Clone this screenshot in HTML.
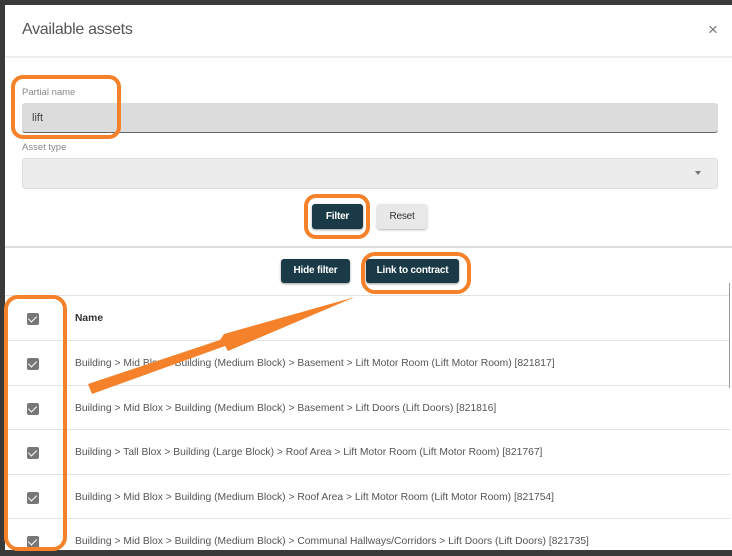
<!DOCTYPE html>
<html><head><style>
body{margin:0;width:732px;height:556px;background:#3a3a3a;font-family:"Liberation Sans",sans-serif;position:relative;overflow:hidden}
.dlg{position:absolute;left:5px;top:5px;width:727px;height:545px;background:#fff;overflow:hidden}
.abs{position:absolute}
.btn{position:absolute;background:#1b3a47;color:#fff;font-size:10px;font-weight:bold;text-align:center;border-radius:3px;box-shadow:0 1px 2px rgba(0,0,0,.4);letter-spacing:-0.2px}
.row{position:absolute;left:19px;width:706px;border-top:1px solid #e2e2e2;height:44px}
.cb{position:absolute;left:8px;width:12px;height:12px;background:#777;border-radius:2px}
.cb:after{content:"";position:absolute;left:3px;top:1px;width:4px;height:7px;border:solid #fff;border-width:0 1.5px 1.5px 0;transform:rotate(45deg)}
.txt{position:absolute;left:51px;font-size:10.3px;color:#555;white-space:nowrap;letter-spacing:0}
.o{position:absolute;border:4px solid #f5822a;border-radius:12px}
</style></head><body>
<div class="dlg">
<div class="abs" style="left:17px;top:16px;font-size:16px;color:#555;letter-spacing:-0.3px">Available assets</div>
<div class="abs" style="left:703px;top:15px;font-size:17px;color:#777">×</div>
<div class="abs" style="left:0;top:51px;width:727px;height:2px;background:#eee"></div>
<div class="abs" style="left:17px;top:82px;font-size:9.5px;color:#888">Partial name</div>
<div class="abs" style="left:17px;top:98px;width:696px;height:30px;background:#dcdcdc;border-radius:3px;border-bottom:1px solid #666;box-sizing:border-box"></div>
<div class="abs" style="left:27px;top:107px;font-size:11px;color:#444">lift</div>
<div class="abs" style="left:17px;top:137px;font-size:9.5px;color:#888">Asset type</div>
<div class="abs" style="left:17px;top:153px;width:696px;height:31px;background:#ececec;border-radius:3px;border:1px solid #ddd;box-sizing:border-box"></div>
<div class="abs" style="left:690px;top:166px;border:3px solid transparent;border-top:4px solid #777"></div>
<div class="btn" style="left:307px;top:199px;width:51px;height:25px;line-height:25px">Filter</div>
<div class="btn" style="left:372px;top:199px;width:50px;height:25px;line-height:25px;background:#e8e8e8;color:#333;font-weight:normal;box-shadow:0 1px 2px rgba(0,0,0,.3)">Reset</div>
<div class="abs" style="left:0;top:241px;width:727px;height:2px;background:#ddd"></div>
<div class="btn" style="left:276px;top:254px;width:69px;height:24px;line-height:24px">Hide filter</div>
<div class="btn" style="left:361px;top:254px;width:93px;height:24px;line-height:24px">Link to contract</div>
<div class="row" style="top:290px;left:0;width:725px;height:45px"><div class="cb" style="left:22px;top:17px"></div><div class="txt" style="left:70px;top:17px;color:#333;font-weight:bold">Name</div></div>
<div class="row" style="top:335px;left:0;width:725px"><div class="cb" style="left:22px;top:17px"></div><div class="txt" style="left:70px;top:17px">Building &gt; Mid Blox &gt; Building (Medium Block) &gt; Basement &gt; Lift Motor Room (Lift Motor Room) [821817]</div></div>
<div class="row" style="top:380px;left:0;width:725px"><div class="cb" style="left:22px;top:17px"></div><div class="txt" style="left:70px;top:17px">Building &gt; Mid Blox &gt; Building (Medium Block) &gt; Basement &gt; Lift Doors (Lift Doors) [821816]</div></div>
<div class="row" style="top:424px;left:0;width:725px"><div class="cb" style="left:22px;top:17px"></div><div class="txt" style="left:70px;top:17px">Building &gt; Tall Blox &gt; Building (Large Block) &gt; Roof Area &gt; Lift Motor Room (Lift Motor Room) [821767]</div></div>
<div class="row" style="top:469px;left:0;width:725px"><div class="cb" style="left:22px;top:17px"></div><div class="txt" style="left:70px;top:17px">Building &gt; Mid Blox &gt; Building (Medium Block) &gt; Roof Area &gt; Lift Motor Room (Lift Motor Room) [821754]</div></div>
<div class="row" style="top:513px;left:0;width:725px"><div class="cb" style="left:22px;top:17px"></div><div class="txt" style="left:70px;top:17px">Building &gt; Mid Blox &gt; Building (Medium Block) &gt; Communal Hallways/Corridors &gt; Lift Doors (Lift Doors) [821735]</div></div>
<div class="abs" style="left:724px;top:278px;width:1px;height:105px;background:#999"></div>
</div>
<div class="o" style="left:11px;top:75px;width:102px;height:56px"></div>
<div class="o" style="left:304px;top:194px;width:58px;height:37px"></div>
<div class="o" style="left:361px;top:252px;width:102px;height:34px;border-radius:14px"></div>
<div class="o" style="left:4px;top:295px;width:55px;height:248px;border-radius:14px"></div>
<svg class="abs" style="left:0;top:0" width="732" height="556"><polygon points="88,384 220,340 224,334 355,297 228,351 225,346 92,394" fill="#f5822a"/></svg>
</body></html>
